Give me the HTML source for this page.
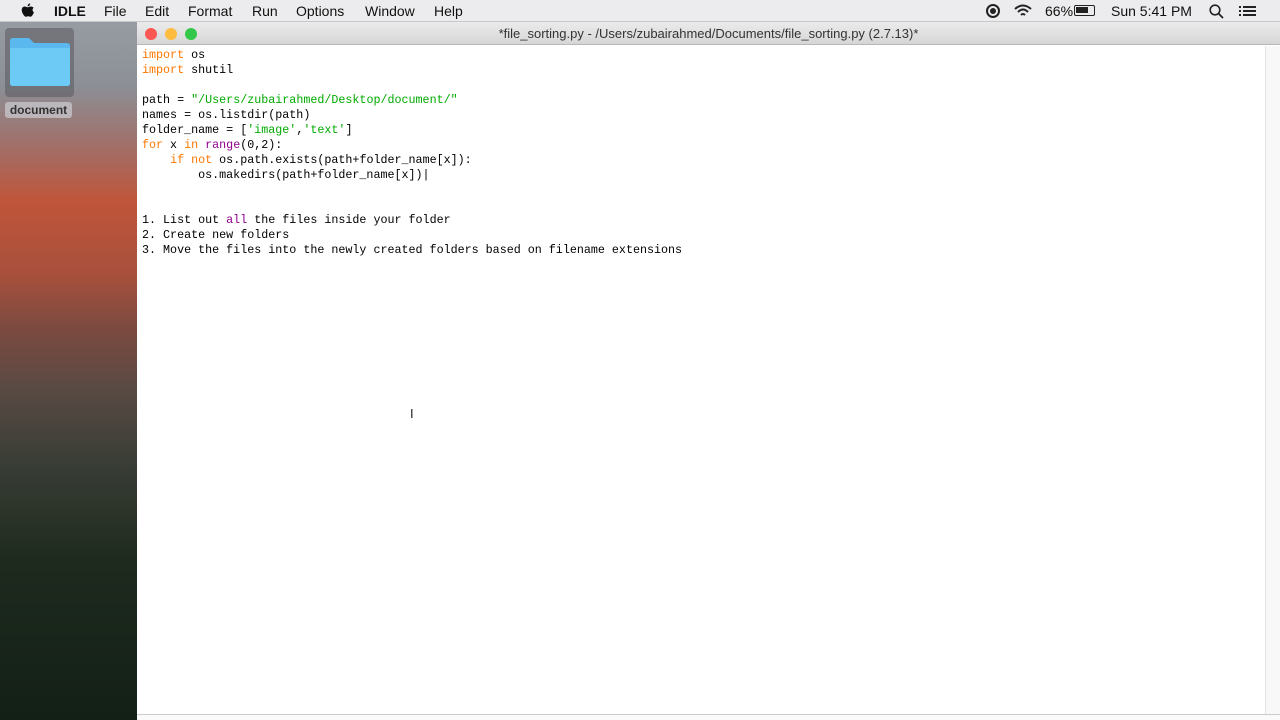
<!DOCTYPE html>
<html><head><style>
*{margin:0;padding:0;box-sizing:border-box}
body{width:1280px;height:720px;overflow:hidden;position:relative;font-family:"Liberation Sans",sans-serif;background:#222}
#wall{position:absolute;left:0;top:0;width:137px;height:720px;background:linear-gradient(180deg,#9aa0a6 0%,#8c8f96 12%,#a0706a 20%,#c0553a 28%,#a8503c 38%,#7a4a40 46%,#5a4a44 54%,#3a3e36 64%,#1e2a1e 78%,#132016 100%)}
#menu{position:absolute;left:0;top:0;width:1280px;height:22px;background:#ecebed;border-bottom:1px solid #c8c8c8;font-size:14px;color:#111}
#menu span{position:absolute;top:3px}
#win{position:absolute;left:137px;top:22px;width:1143px;height:698px;background:#fff}
#title{height:23px;background:linear-gradient(#ebebeb,#d6d6d6);border-bottom:1px solid #b8b8b8;text-align:center;font-size:13px;line-height:24px;color:#333;position:relative}
.dot{position:absolute;top:6px;width:12px;height:12px;border-radius:50%}
#code{position:absolute;left:5px;top:26px;font-family:"Liberation Mono",monospace;font-size:11.7px;line-height:15px;white-space:pre;color:#000}
.k{color:#ff7700}.s{color:#00aa00}.b{color:#900090}
#sb{position:absolute;right:0;top:24px;width:15px;height:668px;background:#f8f8f8;border-left:1px solid #e4e4e4}
#bot{position:absolute;left:0;bottom:0;width:100%;height:6px;background:#fafafa;border-top:1px solid #ccc}
</style></head><body>
<div id="wall"></div>
<div style="position:absolute;left:5px;top:28px;width:69px;height:69px;background:rgba(90,90,95,.55);border-radius:4px"></div>
<svg style="position:absolute;left:9px;top:37px" width="62" height="50"><path d="M1 4 Q1 1 4 1 H20 L25 6 H58 Q61 6 61 9 V46 Q61 49 58 49 H4 Q1 49 1 46Z" fill="#5ab8ee"/><path d="M1 11 H61 V46 Q61 49 58 49 H4 Q1 49 1 46Z" fill="#6ccaf5"/></svg>
<div style="position:absolute;left:5px;top:102px;width:67px;height:16px;background:rgba(200,200,205,.75);border-radius:3px;font-size:12px;font-weight:bold;color:#333;text-align:center;line-height:16px">document</div>
<div id="menu">
<svg style="position:absolute;left:21px;top:3px" width="13" height="16" viewBox="0 0 13 16"><path d="M6.5 4.2C7.6 4.2 8.6 3.5 10 3.5 11 3.5 12 4 12.6 4.9 11.2 5.8 11.2 8.2 12.9 9.2 12.4 10.8 11.3 13 10 13.6 9 14 8.5 13.3 7.3 13.3 6 13.3 5.6 14 4.6 13.7 3 13.2 0.2 9 0.8 6 1.2 4.3 2.5 3.5 3.7 3.5 5 3.5 5.6 4.2 6.5 4.2Z M6.6 3.4C6.5 2 7.6 0.6 9.2 0.4 9.3 1.9 8 3.4 6.6 3.4Z" fill="#111"/></svg>
<span style="left:54px;font-weight:bold">IDLE</span>
<span style="left:104px">File</span><span style="left:145px">Edit</span><span style="left:188px">Format</span><span style="left:252px">Run</span><span style="left:296px">Options</span><span style="left:365px">Window</span><span style="left:434px">Help</span>
<span style="left:986px;top:4px;width:14px;height:14px;border:2px solid #222;border-radius:50%"></span>
<span style="left:990px;top:8px;width:6px;height:6px;background:#222;border-radius:50%"></span>
<svg style="position:absolute;left:1013px;top:3px" width="20" height="15"><path d="M2 6 Q10 -1 18 6 M5 9 Q10 4 15 9 M8 12 Q10 10 12 12" stroke="#222" stroke-width="2" fill="none"/></svg>
<span style="left:1045px">66%</span>
<span style="left:1074px;top:5px;width:21px;height:11px;border:1.5px solid #222;border-radius:2px"><i style="display:block;margin:1px;width:12px;height:6px;background:#222"></i></span>
<span style="left:1111px">Sun 5:41 PM</span>
<svg style="position:absolute;left:1209px;top:4px" width="16" height="16"><circle cx="6" cy="6" r="4.8" stroke="#222" stroke-width="1.6" fill="none"/><path d="M9.5 9.5 L14 14" stroke="#222" stroke-width="1.8"/></svg>
<svg style="position:absolute;left:1239px;top:5px" width="18" height="13"><path d="M0 2H2M4 2H17M0 6H2M4 6H17M0 10H2M4 10H17" stroke="#222" stroke-width="2"/></svg>
</div>
<div id="win">
<div id="title"><i class="dot" style="left:8px;background:#fc5753"></i><i class="dot" style="left:28px;background:#fdbc40"></i><i class="dot" style="left:48px;background:#34c84a"></i>*file_sorting.py - /Users/zubairahmed/Documents/file_sorting.py (2.7.13)*</div>
<div id="code"><span class="k">import</span> os
<span class="k">import</span> shutil

path = <span class="s">"/Users/zubairahmed/Desktop/document/"</span>
names = os.listdir(path)
folder_name = [<span class="s">'image'</span>,<span class="s">'text'</span>]
<span class="k">for</span> x <span class="k">in</span> <span class="b">range</span>(0,2):
    <span class="k">if</span> <span class="k">not</span> os.path.exists(path+folder_name[x]):
        os.makedirs(path+folder_name[x])|


1. List out <span class="b">all</span> the files inside your folder
2. Create new folders
3. Move the files into the newly created folders based on filename extensions</div>
<div id="sb"></div>
<div id="bot"></div>
<div style="position:absolute;left:273px;top:384px;font-size:13px;color:#222">I</div>
</div>
</body></html>
